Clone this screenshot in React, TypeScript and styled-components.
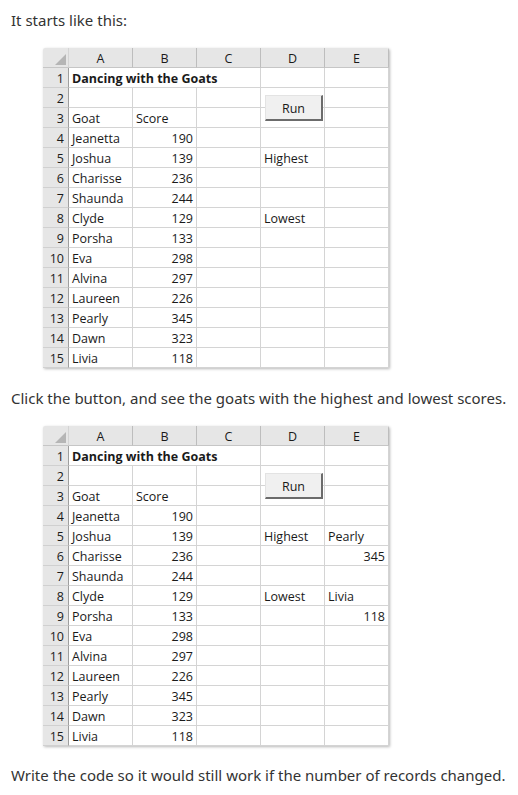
import React from "react";
import styled, { createGlobalStyle } from "styled-components";

const GlobalStyle = createGlobalStyle`
  body {
    margin: 0;
    background: #ffffff;
  }
`;

const Page = styled.div`
  padding: 10px 11px;
  font-family: "Noto Sans", "Open Sans", sans-serif;
  color: #333333;
`;

const Para = styled.p<{ $gap: number }>`
  margin: ${(p) => p.$gap}px 0 0;
  font-size: 15px;
  line-height: 20px;
`;

const SheetWrap = styled.div`
  position: relative;
  margin: 18px 0 0 32px;
  width: 346px;
  box-shadow: 1px 1px 3px rgba(0, 0, 0, 0.28);
  border-radius: 2px 2px 0 0;
  overflow: hidden;
`;

const Grid = styled.div`
  display: grid;
  grid-template-columns: 26px repeat(5, 64px);
  grid-auto-rows: 20px;
  font-family: "Open Sans", "Noto Sans", sans-serif;
  font-size: 12.5px;
  color: #1a1a1a;
`;

const HeadCell = styled.div<{ $corner?: boolean }>`
  box-sizing: border-box;
  background: #e6e6e6;
  border-right: 1px solid ${(p) => (p.$corner ? "#d4d4d4" : "#bdbdbd")};
  border-bottom: 1px solid #c6c6c6;
  display: flex;
  align-items: center;
  justify-content: center;
  padding-top: 1px;
  position: relative;
`;

const RowNum = styled.div`
  box-sizing: border-box;
  background: #e6e6e6;
  border-right: 1px solid #9e9e9e;
  border-bottom: 1px solid #d0d0d0;
  display: flex;
  align-items: center;
  justify-content: flex-end;
  padding: 2px 4px 0 0;
`;

const Cell = styled.div<{ $num?: boolean; $bold?: boolean; $span?: number }>`
  box-sizing: border-box;
  border-right: 1px solid #d4d4d4;
  border-bottom: 1px solid #d4d4d4;
  display: flex;
  align-items: center;
  justify-content: ${(p) => (p.$num ? "flex-end" : "flex-start")};
  padding: 2px 3px 0;
  white-space: nowrap;
  font-weight: ${(p) => (p.$bold ? 700 : 400)};
  grid-column: span ${(p) => p.$span ?? 1};
  overflow: visible;
`;

const RunButton = styled.button`
  position: absolute;
  left: 222px;
  top: 47px;
  width: 58px;
  height: 26px;
  box-sizing: border-box;
  background: #f0f0f0;
  border: 1px solid #e3e3e3;
  border-right: 2px solid #6b6b6b;
  border-bottom: 2px solid #6b6b6b;
  font-family: "Open Sans", "Noto Sans", sans-serif;
  font-size: 12.5px;
  color: #1a1a1a;
  padding: 1px 0 0;
`;

const goats: [string, number][] = [
  ["Jeanetta", 190],
  ["Joshua", 139],
  ["Charisse", 236],
  ["Shaunda", 244],
  ["Clyde", 129],
  ["Porsha", 133],
  ["Eva", 298],
  ["Alvina", 297],
  ["Laureen", 226],
  ["Pearly", 345],
  ["Dawn", 323],
  ["Livia", 118],
];

type Extra = { d?: string; e?: string; eNum?: boolean };

const Sheet = ({ solved }: { solved: boolean }) => {
  const hi = goats.reduce((a, b) => (b[1] > a[1] ? b : a));
  const lo = goats.reduce((a, b) => (b[1] < a[1] ? b : a));
  const extras: Record<number, Extra> = {
    5: { d: "Highest", e: solved ? hi[0] : "" },
    6: { e: solved ? String(hi[1]) : "", eNum: true },
    8: { d: "Lowest", e: solved ? lo[0] : "" },
    9: { e: solved ? String(lo[1]) : "", eNum: true },
  };

  return (
    <SheetWrap>
      <Grid>
        <HeadCell $corner>
          <svg width="26" height="20" viewBox="0 0 26 20" style={{ position: "absolute", left: 0, top: 0 }}>
            <polygon points="23,6 23,17 12,17" fill="#b5b5b5" />
          </svg>
        </HeadCell>
        {["A", "B", "C", "D", "E"].map((c) => (
          <HeadCell key={c}>{c}</HeadCell>
        ))}

        <RowNum>1</RowNum>
        <Cell $bold $span={3}>Dancing with the Goats</Cell>
        <Cell />
        <Cell />

        <RowNum>2</RowNum>
        <Cell /><Cell /><Cell /><Cell /><Cell />

        <RowNum>3</RowNum>
        <Cell>Goat</Cell>
        <Cell>Score</Cell>
        <Cell /><Cell /><Cell />

        {goats.map(([name, score], i) => {
          const row = i + 4;
          const x = extras[row] ?? {};
          return (
            <React.Fragment key={name}>
              <RowNum>{row}</RowNum>
              <Cell>{name}</Cell>
              <Cell $num>{score}</Cell>
              <Cell />
              <Cell>{x.d}</Cell>
              <Cell $num={x.eNum}>{x.e}</Cell>
            </React.Fragment>
          );
        })}
      </Grid>
      <RunButton>Run</RunButton>
    </SheetWrap>
  );
};

export default function App() {
  return (
    <Page>
      <GlobalStyle />
      <Para $gap={0}>It starts like this:</Para>
      <Sheet solved={false} />
      <Para $gap={20}>Click the button, and see the goats with the highest and lowest scores.</Para>
      <Sheet solved />
      <Para $gap={19}>Write the code so it would still work if the number of records changed.</Para>
    </Page>
  );
}
